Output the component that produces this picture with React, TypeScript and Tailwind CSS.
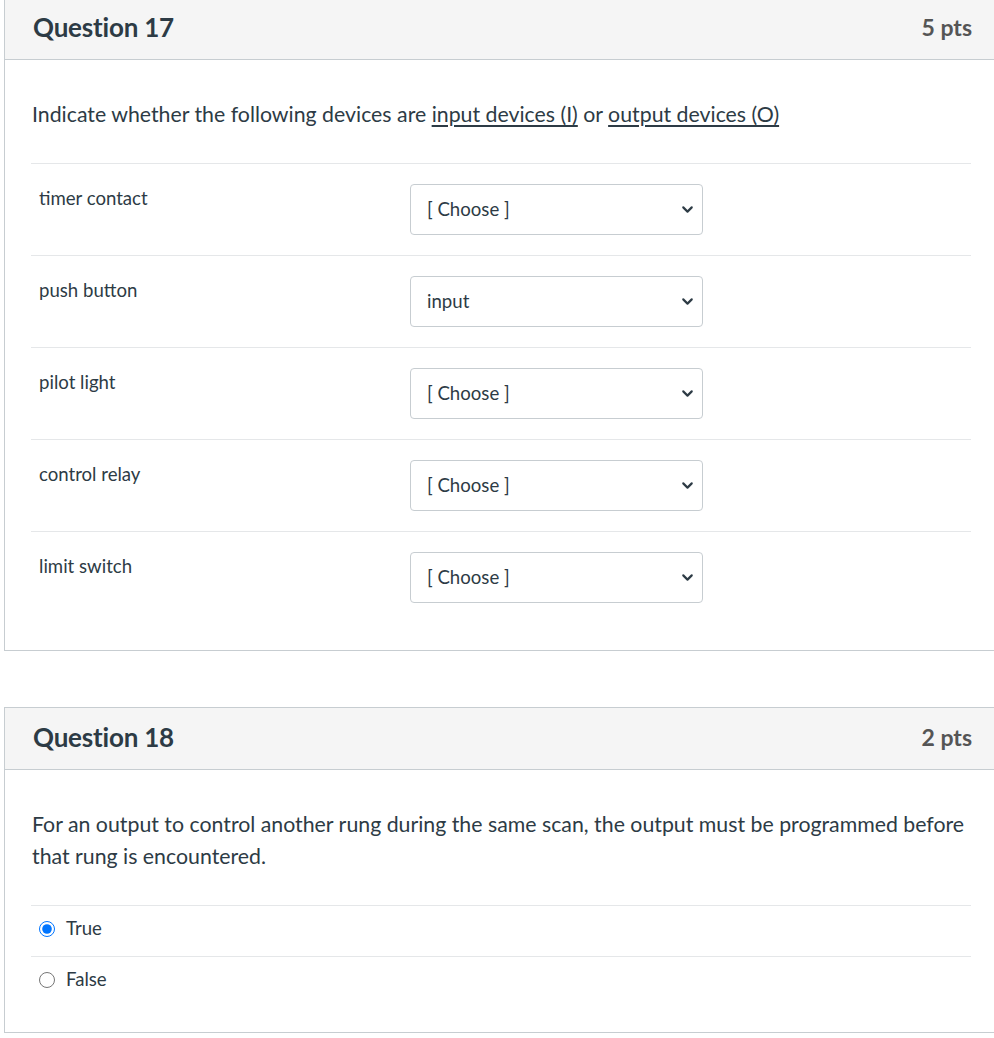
import { ChevronDown } from 'lucide-react';

const rows = [
  { label: 'timer contact', value: '[ Choose ]' },
  { label: 'push button', value: 'input' },
  { label: 'pilot light', value: '[ Choose ]' },
  { label: 'control relay', value: '[ Choose ]' },
  { label: 'limit switch', value: '[ Choose ]' },
];

const Header = ({ title, pts }: { title: string; pts: string }) => (
  <div className="h-[62px] bg-[#f5f5f5] border-b border-[#c7cdd1] flex items-center justify-between pl-[28px] pr-[27px] pb-[3px]">
    <h2 className="text-[26px] font-bold text-[#2d3b45] tracking-[-0.2px]">{title}</h2>
    <span className="text-[23px] font-bold text-[#555555]">{pts}</span>
  </div>
);

const App = () => {
  return (
    <div className="w-[994px] h-[1038px] overflow-hidden bg-white text-[#2d3b45]" style={{ fontFamily: 'Lato, "Open Sans", sans-serif' }}>
      <div className="w-[996px] ml-[4px] -mt-[3px] border border-[#c7cdd1]">
        <Header title="Question 17" pts="5 pts" />
        <div className="pl-[26px] pr-[28px] pt-[38px] pb-[27px]">
          <p className="pl-[1px] text-[21.3px] leading-[32px]">
            Indicate whether the following devices are <span className="underline underline-offset-[3px]">input devices (I)</span> or{' '}
            <span className="underline underline-offset-[3px]">output devices (O)</span>
          </p>
          <div className="mt-[33px]">
            {rows.map((r) => (
              <div key={r.label} className="border-t border-[#e5e7e9] flex py-[20px] pl-[8px]">
                <div className="w-[371px] pt-[1px] text-[18.6px] leading-[26px]">{r.label}</div>
                <div className="w-[293px] h-[51px] border border-[#c7cdd1] rounded-[4px] flex items-center justify-between pl-[16px] pr-[6px] text-[18.6px]">
                  <span>{r.value}</span>
                  <ChevronDown size={17} strokeWidth={3} className="text-[#2d3b45]" />
                </div>
              </div>
            ))}
          </div>
        </div>
      </div>

      <div className="w-[996px] ml-[4px] mt-[56px] border border-[#c7cdd1]">
        <Header title="Question 18" pts="2 pts" />
        <div className="pl-[26px] pr-[28px] pt-[38px] pb-[25px]">
          <p className="pl-[1px] text-[21.3px] leading-[32px]">
            For an output to control another rung during the same scan, the output must be programmed before that rung is encountered.
          </p>
          <div className="mt-[33px]">
            {['True', 'False'].map((o, i) => (
              <label key={o} className="border-t border-[#e5e7e9] flex items-center h-[51px] pb-[4px] pl-[8px] gap-[11px] text-[18.6px]">
                <input type="radio" name="q18" defaultChecked={i === 0} className="w-[16px] h-[16px] m-0 accent-[#0075ff]" />
                <span>{o}</span>
              </label>
            ))}
          </div>
        </div>
      </div>
    </div>
  );
};

export default App;
